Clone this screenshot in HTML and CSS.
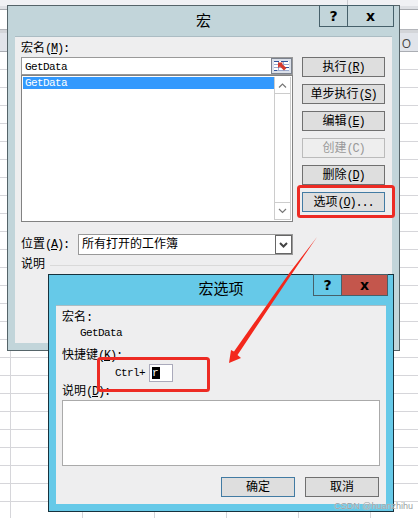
FILE: index.html
```html
<!DOCTYPE html>
<html lang="zh-CN">
<head>
    <meta charset="UTF-8">
    <title>宏</title>
    <link rel="stylesheet" href="styles.css">
</head>
<body>

<div class="desktop">
    <!-- Spreadsheet behind the dialogs -->
    <div class="sheet">
        <div class="ribbon"></div>
        <div class="formula-bar"></div>
        <div class="col-header">O</div>
        <div class="cells"></div>
    </div>

    <!-- Macro dialog -->
    <div class="window macro">
        <div class="titlebar">
            <span class="title">宏</span>
            <div class="controls"><button class="help">?</button><button class="close">x</button></div>
        </div>
        <div class="client">
            <div class="columns">
                <div class="left">
                    <label>宏名<span class="half">(<u>M</u>):</span></label>
                    <div class="name-row">
                        <span class="latin">GetData</span>
                        <svg class="ref" width="21" height="16" viewBox="0 0 21 16">
                            <rect x="0.5" y="0.5" width="20" height="15" fill="#dce1ea" stroke="#7b828e"/>
                            <rect x="3" y="3" width="15" height="10" fill="#fff"/>
                            <path d="M3 6.5H18M3 9.5H18M3 12.5H18M7.5 3V13M12.5 3V13" stroke="#9aabcf"/>
                            <path d="M3 3.5H8M10 3.5H17M14 9.5H18M3 12.5H6" stroke="#31549b"/>
                            <path d="M7 4.500H12L11 6L15.500 10L13 12.500L9 8.500L7 10Z" fill="#d53a2c"/>
                        </svg>
                    </div>
                    <div class="list">
                        <div class="items"><div class="item latin">GetData</div></div>
                        <div class="scroll">
                            <svg width="15" height="16" viewBox="0 0 15 16"><path d="M4 10.5L7.5 7L11 10.5" fill="none" stroke="#777" stroke-width="1.2"/></svg>
                            <svg width="15" height="16" viewBox="0 0 15 16"><path d="M4 6L7.5 9.5L11 6" fill="none" stroke="#777" stroke-width="1.2"/></svg>
                        </div>
                    </div>
                </div>
                <div class="buttons">
                    <button>执行<span class="half">(<u>R</u>)</span></button>
                    <button>单步执行<span class="half">(<u>S</u>)</span></button>
                    <button>编辑<span class="half">(<u>E</u>)</span></button>
                    <button class="disabled">创建<span class="half">(C)</span></button>
                    <button>删除<span class="half">(<u>D</u>)</span></button>
                    <button class="focus">选项<span class="half">(<u>O</u>)...</span></button>
                </div>
            </div>
            <div class="place">
                <label>位置<span class="half">(<u>A</u>):</span></label>
                <div class="select">
                    <span>所有打开的工作簿</span>
                    <svg width="17" height="19" viewBox="0 0 17 19"><rect x="0.5" y="0.5" width="16" height="18" fill="#fff" stroke="#666"/><path d="M5 8L8.5 11.5L12 8" fill="none" stroke="#444" stroke-width="2"/></svg>
                </div>
            </div>
            <div class="group"><span>说明</span></div>
        </div>
    </div>

    <!-- Macro options dialog -->
    <div class="window options">
        <div class="titlebar">
            <span class="title">宏选项</span>
            <div class="controls"><button class="help">?</button><button class="close">x</button></div>
        </div>
        <div class="client">
            <label>宏名<span class="half">:</span></label>
            <div class="macro-name latin">GetData</div>
            <label class="key-label">快捷键<span class="half">(<u>K</u>):</span></label>
            <div class="key-row latin">Ctrl+<span class="key"><span class="selected">r</span></span></div>
            <label class="desc-label">说明<span class="half">(<u>D</u>):</span></label>
            <div class="desc"></div>
            <div class="actions">
                <button class="focus">确定</button>
                <button>取消</button>
            </div>
        </div>
    </div>

    <!-- Annotations -->
    <svg class="marks" width="418" height="518" viewBox="0 0 418 518">
        <rect x="298.5" y="186.5" width="95" height="30" rx="2" fill="none" stroke="#ed2b24" stroke-width="3"/>
        <rect x="98.5" y="358.5" width="110" height="32" rx="2" fill="none" stroke="#ed2b24" stroke-width="3"/>
        <path d="M317 237L289 273.5L234 351.5L231 350L229 363L241 358L237.5 355L291 275Z" fill="#f3281c"/>
    </svg>
    <div class="watermark">CSDN @huanzhihu</div>
</div>

</body>
</html>
```
FILE: styles.css
```css
body {
    margin: 0;
    background: #fff;
    font: 12px/16px "Liberation Mono", "Noto Sans CJK SC", monospace;
    color: #000;
}
.desktop {
    position: relative;
    width: 418px;
    height: 518px;
    overflow: hidden;
}
/* half-width characters take 6px each */
.half {
    letter-spacing: -1.2px;
}
.latin {
    font-size: 11px;
    letter-spacing: -0.6px;
}

/* spreadsheet */
.ribbon {
    box-sizing: border-box;
    height: 10px;
    background: linear-gradient(to right, transparent 347px, #c9cbd0 347px, #c9cbd0 348px, transparent 348px), linear-gradient(#f0f1f4 6px, #dfe1e5 6px);
    border-bottom: 1px solid #a8abb0;
}
.formula-bar {
    box-sizing: border-box;
    height: 20px;
    background: #fff;
    border-bottom: 1px solid #b4b6bb;
}
.col-header {
    box-sizing: border-box;
    height: 22px;
    padding: 3px 7px 0 0;
    background: #e1e4ea;
    border-top: 3px solid #d3d5d9;
    border-bottom: 1px solid #aaadb3;
    font: 12px/16px "Open Sans", sans-serif;
    text-align: right;
    color: #444;
}
.cells {
    height: 466px;
    background-image: linear-gradient(transparent 17px, #d6d6da 17px), linear-gradient(to right, #d6d6da 1px, transparent 1px);
    background-size: 100% 18px, 72px 100%;
    background-position: 0 0, 10px 0;
}

/* windows */
.window {
    position: absolute;
    box-sizing: border-box;
    display: flex;
    flex-direction: column;
    padding: 0 7px 7px;
}
.macro {
    left: 7px;
    top: 5px;
    width: 393px;
    height: 346px;
    background: #c2d5da;
    border: 1px solid #556469;
}
.options {
    left: 48px;
    top: 274px;
    width: 346px;
    height: 238px;
    background: #66c9e8;
    border: 1px solid #17323d;
}
.titlebar {
    position: relative;
    flex: none;
    height: 30px;
    text-align: center;
}
.title {
    display: block;
    padding-top: 2px;
    font-size: 15px;
    line-height: 30px;
}
.options .title {
    padding-top: 1px;
}
.controls {
    position: absolute;
    top: -1px;
    right: -2px;
    display: flex;
}
.controls button {
    height: 22px;
    width: 29px;
    padding: 0;
    background: none;
    border: 1px solid #46606a;
    font: bold 14px/18px "DejaVu Sans", sans-serif;
}
.controls .close {
    width: 47px;
    margin-left: -1px;
}
.options .controls .close {
    background: #c4564c;
}
.client {
    flex: 1;
    box-sizing: border-box;
    background: #eeeeef;
    border-top: 1px solid #abbcc3;
    padding: 4px 6px 0;
}
label {
    display: block;
}
button {
    box-sizing: border-box;
    padding: 2px 0 0;
    background: #dedede;
    border: 1px solid #707070;
    font: inherit;
    color: #000;
}
button.focus {
    border-color: #427ba3;
}
button.disabled {
    background: #eee;
    border-color: #bbb;
    color: #999;
}

/* macro dialog */
.columns {
    display: flex;
    gap: 9px;
}
.left {
    width: 272px;
}
.name-row {
    box-sizing: border-box;
    display: flex;
    justify-content: space-between;
    height: 18px;
    background: #fff;
    border: 1px solid #999;
    padding-left: 3px;
    line-height: 18px;
}
.list {
    box-sizing: border-box;
    display: flex;
    height: 147px;
    padding: 1px;
    background: #fff;
    border: 1px solid #828282;
}
.items {
    flex: 1;
}
.item {
    height: 12px;
    padding-left: 2px;
    background: #3399fd;
    color: #fff;
    line-height: 13px;
}
.scroll {
    display: flex;
    flex-direction: column;
    justify-content: space-between;
    border: 1px solid #ccc;
    border-top: 0;
}
.scroll svg:first-child {
    border-bottom: 1px solid #ccc;
}
.scroll svg:last-child {
    border-top: 1px solid #ccc;
}
.buttons {
    display: flex;
    flex-direction: column;
    gap: 7px;
    padding-top: 16px;
}
.buttons button {
    width: 83px;
    height: 20px;
}
.place {
    display: flex;
    align-items: center;
    margin-top: 12px;
}
.place label {
    width: 57px;
    padding-top: 1px;
}
.select {
    box-sizing: border-box;
    display: flex;
    justify-content: space-between;
    width: 215px;
    height: 21px;
    background: #fff;
    border: 1px solid #999;
    padding-left: 3px;
    line-height: 20px;
}
.group {
    display: flex;
    align-items: center;
    width: 272px;
    margin-top: 2px;
}
.group::after {
    content: "";
    flex: 1;
    margin-left: 5px;
    border-top: 1px solid #d9d9d9;
}

/* options dialog */
.macro-name {
    padding-left: 18px;
    line-height: 14px;
}
.key-label {
    margin-top: 8px;
}
.key-row {
    display: flex;
    align-items: center;
    padding-left: 53px;
}
.key {
    display: flex;
    width: 22px;
    height: 16px;
    margin-left: 4px;
    border: 1px solid #aab;
    background: #fff;
}
.selected {
    width: 8px;
    height: 12px;
    margin: 2px;
    background: #000;
    color: #fff;
    line-height: 12px;
}
.desc-label {
    margin-top: 2px;
}
.desc {
    height: 64px;
    border: 1px solid #aaa;
    background: #fff;
}
.actions {
    display: flex;
    justify-content: flex-end;
    gap: 10px;
    margin-top: 11px;
    padding-right: 1px;
}
.actions button {
    width: 74px;
    height: 20px;
}

.marks {
    position: absolute;
    left: 0;
    top: 0;
}
.watermark {
    position: absolute;
    right: 5px;
    bottom: 5px;
    font: 9px/14px "Liberation Sans", sans-serif;
    color: #999da0;
    text-shadow: 0 0 1px #fff;
}
```
